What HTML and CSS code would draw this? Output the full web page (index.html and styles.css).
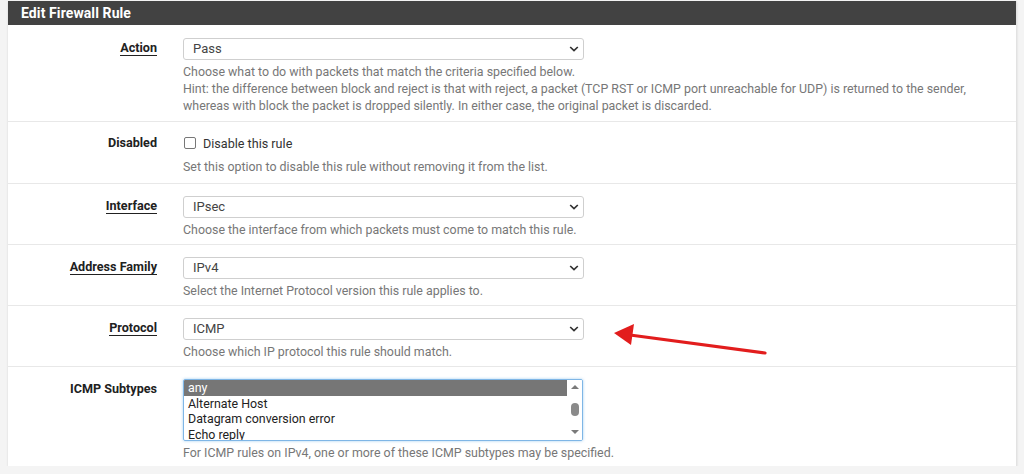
FILE: index.html
```html
<!DOCTYPE html>
<html lang="en">
<head>
    <meta charset="UTF-8">
    <title>Edit Firewall Rule</title>
    <link rel="stylesheet" href="styles.css">
</head>
<body>
    <div class="panel">
        <div class="panel-heading">Edit Firewall Rule</div>

        <div class="form-row first">
            <div class="form-label"><span class="link">Action</span></div>
            <div class="form-field">
                <div class="select">Pass</div>
                <div class="help">Choose what to do with packets that match the criteria specified below.<br>
                Hint: the difference between block and reject is that with reject, a packet (TCP RST or ICMP port unreachable for UDP) is returned to the sender, whereas with block the packet is dropped silently. In either case, the original packet is discarded.</div>
            </div>
        </div>

        <div class="form-row check-row">
            <div class="form-label">Disabled</div>
            <div class="form-field">
                <label class="check"><span class="box"></span>Disable this rule</label>
                <div class="help">Set this option to disable this rule without removing it from the list.</div>
            </div>
        </div>

        <div class="form-row">
            <div class="form-label"><span class="link">Interface</span></div>
            <div class="form-field">
                <div class="select">IPsec</div>
                <div class="help">Choose the interface from which packets must come to match this rule.</div>
            </div>
        </div>

        <div class="form-row">
            <div class="form-label"><span class="link">Address Family</span></div>
            <div class="form-field">
                <div class="select">IPv4</div>
                <div class="help">Select the Internet Protocol version this rule applies to.</div>
            </div>
        </div>

        <div class="form-row">
            <div class="form-label"><span class="link">Protocol</span></div>
            <div class="form-field">
                <div class="select">ICMP</div>
                <div class="help">Choose which IP protocol this rule should match.</div>
            </div>
        </div>

        <div class="form-row last">
            <div class="form-label">ICMP Subtypes</div>
            <div class="form-field">
                <div class="listbox">
                    <div class="options">
                        <div class="option selected">any</div>
                        <div class="option">Alternate Host</div>
                        <div class="option">Datagram conversion error</div>
                        <div class="option">Echo reply</div>
                    </div>
                    <div class="scrollbar">
                        <span class="arrow up"></span>
                        <span class="thumb"></span>
                        <span class="arrow down"></span>
                    </div>
                </div>
                <div class="help">For ICMP rules on IPv4, one or more of these ICMP subtypes may be specified.</div>
            </div>
        </div>
    </div>

    <!-- annotation arrow drawn over the screenshot -->
    <svg class="annotation" width="1024" height="474" viewBox="0 0 1024 474">
        <line x1="765" y1="353" x2="630" y2="335" stroke="#e21d1d" stroke-width="3.2" stroke-linecap="round"/>
        <polygon points="614,333 634,324 631,345" fill="#e21d1d"/>
    </svg>
</body>
</html>
```

FILE: styles.css
```css
body {
    margin: 0;
    padding: 1px 7px 0 8px;
    background-color: #f4f4f4;
    font-family: Roboto, "Liberation Sans", sans-serif;
    color: #212121;
}

.panel {
    background-color: #fff;
    border-right: 1px solid #e2e2e2;
    box-shadow: 0 1px 2px rgba(0, 0, 0, 0.12);
}

.panel-heading {
    background-color: #424242;
    color: #fff;
    font-size: 14px;
    font-weight: bold;
    height: 24px;
    line-height: 24px;
    padding-left: 13px;
    letter-spacing: 0.1px;
}

.form-row {
    display: flex;
    padding: 12px 0 6px 0;
    border-bottom: 1px solid #e8e8e8;
}

.form-label {
    width: 149px;
    padding-right: 13px;
    padding-top: 1px;
    text-align: right;
    font-size: 12.6px;
    font-weight: bold;
    line-height: 18px;
    flex-shrink: 0;
}

.form-row.first {
    padding-top: 13px;
    padding-bottom: 7px;
}

.form-row.last {
    border-bottom: none;
    padding-bottom: 5px;
}

.form-label .link {
    border-bottom: 1px solid #212121;
}

.form-field {
    flex: 1;
    padding-left: 13px;
    padding-right: 30px;
}

.select {
    width: 390px;
    height: 20px;
    line-height: 20px;
    padding-left: 9px;
    border: 1px solid #cfcfcf;
    border-radius: 3px;
    font-size: 13px;
    color: #444;
    background-image: url("data:image/svg+xml;utf8,<svg xmlns='http://www.w3.org/2000/svg' width='10' height='6' viewBox='0 0 10 6'><path d='M1.2 1 L5 4.6 L8.8 1' fill='none' stroke='%23333' stroke-width='1.7'/></svg>");
    background-repeat: no-repeat;
    background-position: right 4px center;
}

.help {
    margin-top: 3px;
    font-size: 12.4px;
    line-height: 17px;
    color: #777;
}

.check {
    display: flex;
    align-items: center;
    height: 18px;
    font-size: 12.6px;
    color: #333;
}

.check .box {
    width: 10px;
    height: 10px;
    border: 1px solid #777;
    border-radius: 2px;
    margin: 0 7px 0 1px;
}

.check-row {
    padding-top: 12px;
    padding-bottom: 8px;
}

.check-row .form-label {
    padding-top: 0;
}

.check-row .help {
    margin-top: 6px;
}

.listbox {
    display: flex;
    width: 398px;
    height: 60px;
    border: 1px solid #7fb6e6;
    border-radius: 2px;
    box-shadow: 0 0 3px rgba(102, 175, 233, 0.6);
    overflow: hidden;
}

.options {
    flex: 1;
    font-size: 12.4px;
    color: #222;
}

.option {
    height: 15.5px;
    line-height: 15.5px;
    padding-left: 4px;
}

.option.selected {
    background-color: #767676;
    color: #fff;
}

.scrollbar {
    width: 15px;
    display: flex;
    flex-direction: column;
    align-items: center;
    justify-content: space-between;
    padding: 5px 0 6px 0;
    background-color: #fff;
}

.arrow {
    width: 0;
    height: 0;
    border-left: 4px solid transparent;
    border-right: 4px solid transparent;
}

.arrow.up {
    border-bottom: 4px solid #7a7a7a;
}

.arrow.down {
    border-top: 4px solid #7a7a7a;
}

.thumb {
    width: 8px;
    height: 13px;
    border-radius: 4px;
    background-color: #8a8a8a;
}

.annotation {
    position: absolute;
    left: 0;
    top: 0;
    pointer-events: none;
}
```
